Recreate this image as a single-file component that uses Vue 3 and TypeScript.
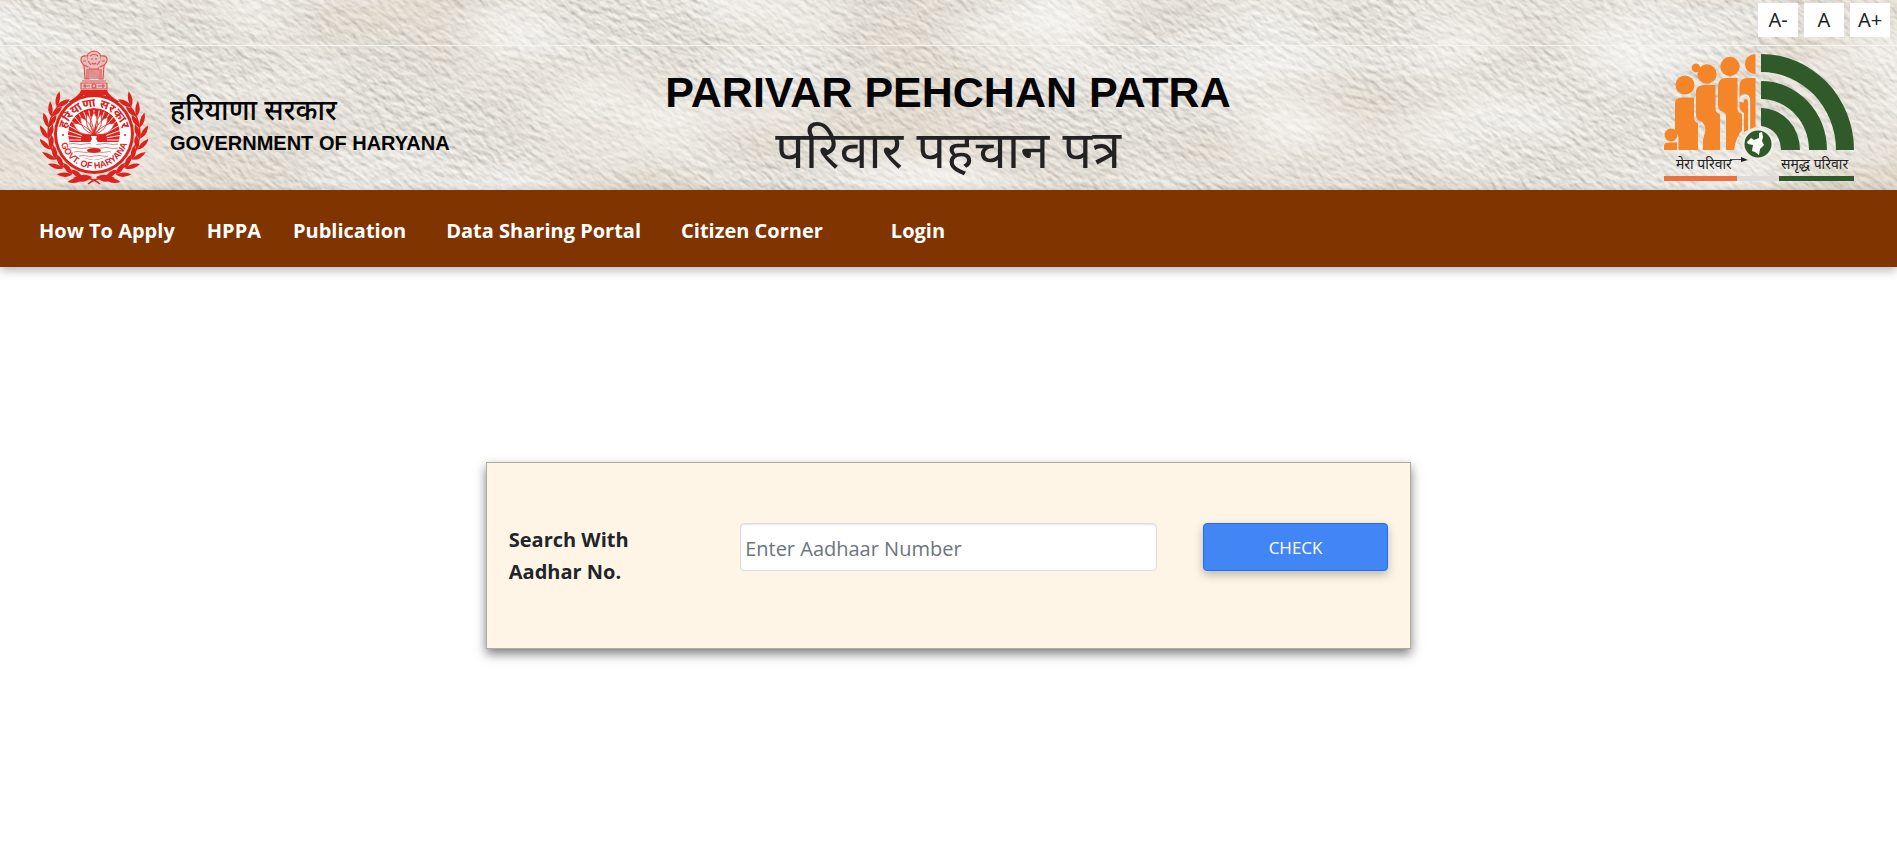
<script setup lang="ts">
import { ref } from 'vue'

interface NavItem {
  label: string
  size: 'near' | 'wide' | 'far'
}

const navItems: NavItem[] = [
  { label: 'How To Apply', size: 'near' },
  { label: 'HPPA', size: 'near' },
  { label: 'Publication', size: 'wide' },
  { label: 'Data Sharing Portal', size: 'wide' },
  { label: 'Citizen Corner', size: 'far' },
  { label: 'Login', size: 'near' },
]

const aadhaar = ref('')

// Laurel leaves on the right half of the wreath; the left half mirrors them.
const leaves = Array.from({ length: 9 }, (_, i) => {
  const angle = 76 - i * 14
  const rad = (angle * Math.PI) / 180
  const at = `translate(${64 + 46 * Math.cos(rad)} ${93 + 46 * Math.sin(rad)})`
  return {
    inner: `${at} rotate(${angle - 16})`,
    outer: `${at} rotate(${angle + 8})`,
  }
})

const rays = Array.from({ length: 19 }, (_, i) => {
  const a = ((180 + i * 10) * Math.PI) / 180
  return {
    x1: 64 + 13 * Math.cos(a),
    y1: 99 + 13 * Math.sin(a),
    x2: 64 + 30 * Math.cos(a),
    y2: 99 + 30 * Math.sin(a),
  }
})
</script>

<template>
  <div class="page">
    <header class="banner">
      <svg class="texture" aria-hidden="true">
        <defs>
          <filter id="paper" x="0" y="0" width="100%" height="100%" color-interpolation-filters="sRGB">
            <feTurbulence type="fractalNoise" baseFrequency="0.1 0.19" numOctaves="4" seed="8" result="n" />
            <feDiffuseLighting in="n" surfaceScale="0.9" diffuseConstant="1.08" lighting-color="#e9e6df">
              <feDistantLight azimuth="250" elevation="64" />
            </feDiffuseLighting>
          </filter>
          <filter id="blotch" x="0" y="0" width="100%" height="100%" color-interpolation-filters="sRGB">
            <feTurbulence type="fractalNoise" baseFrequency="0.006 0.012" numOctaves="2" seed="21" />
            <feColorMatrix values="0 0 0 0 1  0 0 0 0 1  0 0 0 0 1  1.4 0 0 0 -0.55" />
          </filter>
          <filter id="warm" x="0" y="0" width="100%" height="100%" color-interpolation-filters="sRGB">
            <feTurbulence type="fractalNoise" baseFrequency="0.004 0.01" numOctaves="2" seed="5" />
            <feColorMatrix values="0 0 0 0 .86  0 0 0 0 .79  0 0 0 0 .7  0 0.9 0 0 -0.36" />
          </filter>
        </defs>
        <g transform="rotate(38)">
          <rect x="-100" y="-1200" width="2100" height="1600" filter="url(#paper)" />
        </g>
        <rect width="100%" height="100%" filter="url(#warm)" />
        <rect width="100%" height="100%" filter="url(#blotch)" />
      </svg>

      <div class="tools">
        <button type="button" aria-label="Decrease text size">A-</button>
        <button type="button" aria-label="Normal text size">A</button>
        <button type="button" aria-label="Increase text size">A+</button>
      </div>

      <div class="brand">
        <div class="govt">
          <svg class="emblem" viewBox="10 8 108 138" role="img" aria-label="Government of Haryana emblem">
            <defs>
              <path id="arc-top" d="M36.500 102A28.500 28.500 0 1 1 91.500 102" />
              <path id="arc-bottom" d="M29.500 93A34.500 34.500 0 0 0 98.500 93" />
            </defs>
            <g fill="none" stroke="#d9504f" stroke-width="1.100">
              <path fill="#e9bdba" d="M57 19Q56 11 64 10Q72 11 71 19V24L68 28H60L57 24Z" />
              <path d="M60 15Q64 12 68 15M61 18h2M65 18h2M62 22Q64 24 66 22M58 20l3 4M70 20l-3 4" />
              <path fill="#e9bdba" d="M57 15Q50 14 51 20L54 25L55 38H59V28M71 15Q78 14 77 20L74 25L73 38H69V28" />
              <path d="M53 20h3M72 20h3M54 24l4 2M74 24l-4 2M61 28V38M63 28V38M65 28V38M67 28V38M57 28V38M71 28V38" />
              <path fill="#e9bdba" d="M52 40H76M51 42H77V48H51Z" />
              <circle cx="64" cy="45" r="2" /><path d="M53 45h7M68 45h7M55 43v4M73 43v4" />
            </g>
            <path fill="#dc241f" d="M51 49H77Q78 54 90 61H38Q50 54 51 49Z" />
            <path stroke="#fff" stroke-width="1.400" stroke-dasharray="2 .6 1 .5" d="M53 55h10M66 55h10" />
            <g v-for="side in [1, -1]" :key="side" :transform="side === 1 ? '' : 'translate(128 0) scale(-1 1)'">
              <path fill="none" stroke="#dc241f" stroke-width="1.400" d="M58 143Q64 138 72 137Q106 128 110 93Q110 76 98 63" />
              <g v-for="(leaf, i) in leaves" :key="i" fill="#dc241f">
                <path :transform="leaf.inner" d="M0 0Q-6 -7 -2 -15Q4 -7 0 0Z" />
                <path :transform="leaf.outer" d="M0 0Q-1 -9 5 -15Q7 -5 0 0Z" />
              </g>
              <path fill="#dc241f" d="M66 136Q75 131 85 137Q75 145 66 136Z" />
            </g>
            <circle cx="64" cy="93" r="40" fill="#dc241f" />
            <circle cx="64" cy="93" r="37" fill="#fff" />
            <circle cx="64" cy="93" r="26" fill="#dc241f" />
            <g stroke="#fff" stroke-width=".9">
              <line v-for="(r, i) in rays" :key="i" :x1="r.x1" :y1="r.y1" :x2="r.x2" :y2="r.y2" />
            </g>
            <circle cx="64" cy="93" r="28" fill="none" stroke="#fff" stroke-width="4" />
            <path fill="#fff" d="M39 101H89Q87 116 64 119Q41 116 39 101Z" />
            <path fill="none" stroke="#e58a86" stroke-width="1" d="M39 103q4-1 8 0t8 0t8 0t8 0t8 0t9 0M40 107q4-1 8 0t8 0t8 0t8 0t8 0t8 0M44 111q4-1 8 0t8 0t8 0t8 0t5 0M49 115q4-1 8 0t8 0t8 0t5 0" />
            <ellipse cx="64" cy="109.500" rx="7" ry="2.400" fill="#dc241f" />
            <path fill="#fff" stroke="#dc241f" stroke-width=".8" d="M43 82Q54 82 63 93Q48 96 43 82ZM85 82Q74 82 65 93Q80 96 85 82ZM50 76Q60 79 64 93Q51 91 50 76ZM78 76Q68 79 64 93Q77 91 78 76ZM57 73Q63 80 64 93Q54 87 57 73ZM71 73Q65 80 64 93Q74 87 71 73ZM64 71Q71 82 64 93Q57 82 64 71Z" />
            <path fill="#fff" d="M61 95H67L66 98Q69 101 66 104H62Q59 101 62 98Z" />
            <text class="seal-hindi" text-anchor="middle"><textPath href="#arc-top" startOffset="50%">हरियाणा सरकार</textPath></text>
            <text class="seal-text" text-anchor="middle"><textPath href="#arc-bottom" startOffset="50%">GOVT. OF HARYANA</textPath></text>
            <circle cx="33" cy="94" r="1" fill="#dc241f" /><circle cx="95" cy="94" r="1" fill="#dc241f" />
          </svg>
          <div class="govt-names">
            <span class="govt-hindi" lang="hi">हरियाणा सरकार</span>
            <span class="govt-english">GOVERNMENT OF HARYANA</span>
          </div>
        </div>

        <div class="title">
          <h1>PARIVAR PEHCHAN PATRA</h1>
          <p lang="hi">परिवार पहचान पत्र</p>
        </div>

        <svg class="family" viewBox="12 12 194 132" role="img" aria-label="मेरा परिवार समृद्ध परिवार">
          <g fill="#f58529">
            <circle cx="21" cy="95" r="6.500" />
            <path d="M14 110V106Q14 102.500 19 102.500H27V110Z" />
            <circle cx="35" cy="45" r="9.500" />
            <path d="M25 64Q25 57.500 32 57.500H44V77Q44 82 48 83V110H28.500V101Q29 94 25 91Z" />
            <circle cx="57" cy="34" r="9.700" /><circle cx="46" cy="28" r="4.400" />
            <path d="M46 52Q46 45 54 45H65.500V68Q65.500 73 70 74V110H53V100L55.500 90Q55 83 50 81Q46 79 46 75Z" />
            <circle cx="80" cy="26.500" r="9.700" />
            <path d="M68 47Q68 38 76 38H87.500V69Q87.500 73 92 74V90Q86 97 84 110H76V76Q76 72 71 71Q68 69 68 65Z" />
            <path d="M105.500 14V34Q95 33 95 24Q95 15 105.500 14ZM89.500 46Q89.500 38 98 38H105.500V87Q102 88 100 89V61Q100 54 95 54Q91 54 89.500 58ZM89.500 62H91.500Q94 64 94 60Q97 57 98 62V90L94 92V73Q89.500 71 89.500 66Z" />
          </g>
          <path fill="none" stroke="#f2efe9" stroke-width="1.300" d="M91.500 60.500Q92 55 96 55.500Q99.500 56 99.500 61V89" />
          <g fill="#305a2a">
            <path d="M111 14A93 96 0 0 1 204 110H186A75 78 0 0 0 111 32Z" />
            <path d="M111 41A66 69 0 0 1 177 110H159A48 51 0 0 0 111 59Z" />
            <path d="M111 68A39 42 0 0 1 150 110H131Q130 89 111 86Z" />
          </g>
          <circle cx="108" cy="104" r="16" fill="#f0ede7" />
          <circle cx="108" cy="104" r="13.500" fill="#305a2a" />
          <path fill="#fff" d="M109 93L112 92L113 97L112 101L114 105L110 109L109 115L105 112L102 111L103 105L98 104L97 102L101 98L104 100L109 98Z" />
          <text class="slogan" x="26" y="129">मेरा परिवार</text>
          <text class="slogan" x="131" y="129">समृद्ध परिवार</text>
          <path stroke="#222" stroke-width=".8" d="M80 119.500H92" />
          <path fill="#222" d="M91 117L98 120L91 122Z" />
          <path fill="#ed7040" d="M14 136H87V141H14Z" />
          <path fill="#dedcda" d="M87 136H129V141H87Z" />
          <path fill="#305a2a" d="M129 136H204V141H129Z" />
        </svg>
      </div>
    </header>

    <nav class="menu" aria-label="Main">
      <a v-for="item in navItems" :key="item.label" href="#" :class="item.size">{{ item.label }}</a>
    </nav>

    <main>
      <form class="card" @submit.prevent>
        <label for="aadhaar">Search With Aadhar No.</label>
        <input id="aadhaar" v-model="aadhaar" type="text" placeholder="Enter Aadhaar Number" />
        <button type="submit">CHECK</button>
      </form>
    </main>
  </div>
</template>

<style>
body {
  background: #fff;
}
</style>

<style scoped>
.page {
  font-family: "Open Sans", "Noto Sans", sans-serif;
  font-size: 20px;
  color: #212529;
}

.banner {
  position: relative;
  overflow: hidden;
  background: #e8e5de;
}

.texture {
  position: absolute;
  inset: 0;
  width: 100%;
  height: 100%;
}

.tools {
  position: relative;
  display: flex;
  justify-content: flex-end;
  gap: 6px;
  height: 46px;
  padding: 3px 7px 0 0;
  box-sizing: border-box;
  border-bottom: 1px solid #f6f4ef;
}

.tools button {
  width: 40px;
  height: 34px;
  padding: 0;
  border: 0;
  background: #fff;
  color: #212529;
  font-family: "Noto Sans", sans-serif;
  font-size: 20px;
  line-height: 34px;
}

.brand {
  position: relative;
  display: grid;
  grid-template-columns: 1fr auto 1fr;
  align-items: center;
  height: 144px;
  padding: 0 41px 0 40px;
}

.govt {
  display: flex;
  align-items: center;
  gap: 22px;
}

.emblem {
  width: 108px;
  height: 138px;
}

.seal-hindi {
  font: bold 12px "Noto Sans", sans-serif;
  fill: #dc241f;
}

.seal-text {
  font: bold 9px "Liberation Sans", sans-serif;
  fill: #dc241f;
}

.govt-names {
  display: flex;
  flex-direction: column;
  padding-top: 14px;
  color: #050505;
  white-space: nowrap;
}

.govt-hindi {
  font: 500 28px/36px "Noto Sans", sans-serif;
}

.govt-english {
  font: bold 20px/32px "Liberation Sans", Arial, sans-serif;
}

.title {
  padding-top: 8px;
  text-align: center;
  color: #050505;
  white-space: nowrap;
}

.title h1 {
  margin: 0;
  font: bold 43px/52px "Liberation Sans", Arial, sans-serif;
}

.title p {
  margin: 0;
  font: 400 52px/60px "Noto Sans", sans-serif;
  color: #222;
}

.family {
  justify-self: end;
  width: 194px;
  height: 132px;
}

.slogan {
  font: 14px "Noto Sans", sans-serif;
  fill: #222;
}

.menu {
  position: relative;
  display: flex;
  align-items: center;
  height: 77px;
  padding: 4px 39px 0;
  box-sizing: border-box;
  background: #803400;
  box-shadow: 0 3px 10px rgba(0, 0, 0, 0.3);
}

.menu a {
  margin-right: 32px;
  color: #fff;
  font-weight: bold;
  line-height: 32px;
  text-decoration: none;
}

.menu a.wide {
  margin-right: 40px;
}

.menu a.far {
  margin-right: 68px;
}

main {
  display: flex;
  justify-content: center;
  padding: 195px 0 60px;
}

.card {
  display: grid;
  grid-template-columns: repeat(4, minmax(0, 1fr));
  gap: 46px;
  align-items: start;
  box-sizing: border-box;
  width: calc(50% - 23px);
  padding: 60px 22px;
  border: 1px solid #aaa;
  background: #fef5e7;
  box-shadow: 0 5px 10px rgba(0, 0, 0, 0.5);
}

.card label {
  padding-top: 1px;
  font-weight: bold;
  line-height: 32px;
}

.card input {
  grid-column: span 2;
  box-sizing: border-box;
  height: 48px;
  min-width: 0;
  padding: 2px 4px 0;
  border: 1px solid #ddd;
  border-radius: 4px;
  background: #fff;
  box-shadow: inset 0 1px 2px rgba(0, 0, 0, 0.1);
  color: #495057;
  font: 20px "Open Sans", sans-serif;
}

.card input::placeholder {
  color: #6c757d;
  opacity: 1;
}

.card button {
  height: 48px;
  padding: 0;
  border: 1px solid #1a73e8;
  border-radius: 4px;
  background: #4285f4;
  box-shadow: 0 4px 10px rgba(0, 0, 0, 0.25);
  color: #fff;
  font: 17px "Open Sans", sans-serif;
}
</style>
